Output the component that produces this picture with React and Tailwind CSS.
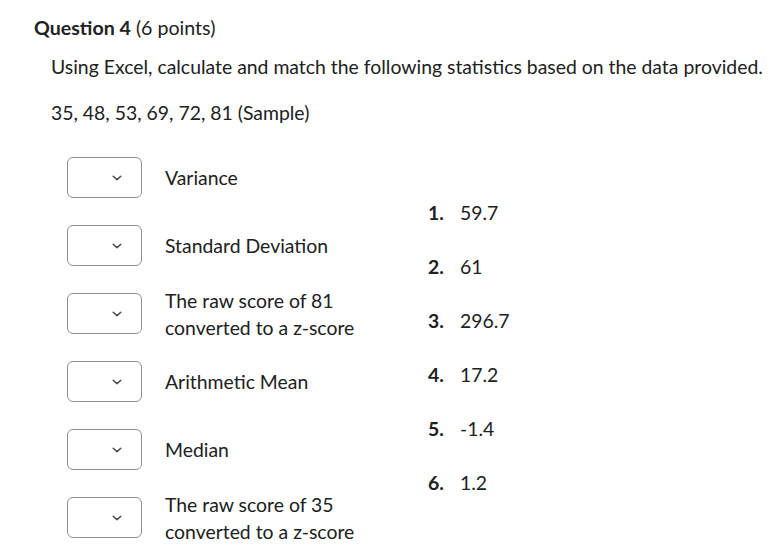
import React from "react";

const ROWS = [
  ["Variance"],
  ["Standard Deviation"],
  ["The raw score of 81", "converted to a z-score"],
  ["Arithmetic Mean"],
  ["Median"],
  ["The raw score of 35", "converted to a z-score"],
];

const CHOICES = ["59.7", "61", "296.7", "17.2", "-1.4", "1.2"];

function Chevron() {
  return (
    <svg width="10" height="6" viewBox="0 0 10 6" fill="none">
      <path d="M1.2 1.2L5 4.6l3.8-3.4" stroke="#494c4e" strokeWidth="1.5" strokeLinecap="round" strokeLinejoin="round" />
    </svg>
  );
}

export default function App() {
  return (
    <div
      className="w-[779px] h-[554px] bg-white text-[#202122] overflow-hidden"
      style={{ fontFamily: "Lato, 'Open Sans', sans-serif" }}
    >
      <h2 className="pl-[34px] pt-[15px] text-[19.6px] leading-[26px]">
        <span className="font-bold">Question 4</span> (6 points)
      </h2>
      <p className="pl-[51px] mt-[12px] text-[19.4px] leading-[27px]">
        Using Excel, calculate and match the following statistics based on the data provided.
      </p>
      <p className="pl-[51px] mt-[19px] text-[19.4px] leading-[27px]">35, 48, 53, 69, 72, 81 (Sample)</p>

      <div className="flex mt-[31px]">
        <div className="pl-[67px] flex flex-col gap-[27px] w-[428px]">
          {ROWS.map((lines, i) => (
            <div key={i} className="flex items-center h-[41px]">
              <div className="w-[75px] h-[41px] shrink-0 border border-[#8d9094] rounded-[6px] flex items-center justify-end pr-[19px]">
                <Chevron />
              </div>
              <div className="ml-[23px] text-[19.4px] leading-[27px]">
                {lines.map((l, j) => (
                  <div key={j}>{l}</div>
                ))}
              </div>
            </div>
          ))}
        </div>
        <div className="pt-[42px] flex flex-col gap-[27px] text-[19.4px] leading-[27px]">
          {CHOICES.map((c, i) => (
            <div key={i} className="flex">
              <span className="font-bold w-[32px]">{i + 1}.</span>
              <span>{c}</span>
            </div>
          ))}
        </div>
      </div>
    </div>
  );
}
